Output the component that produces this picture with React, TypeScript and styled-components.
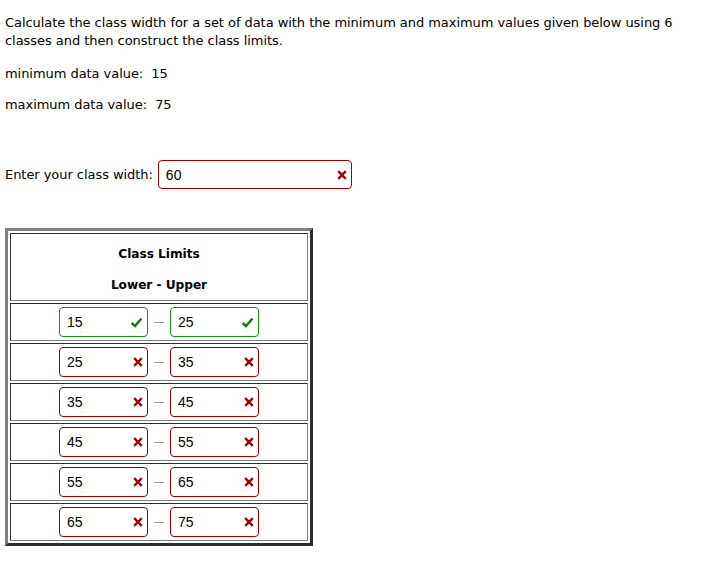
import React from 'react'
import styled, { createGlobalStyle } from 'styled-components'

const GlobalStyle = createGlobalStyle`
  html, body {
    margin: 0;
    padding: 0;
    background: #fff;
  }
  body {
    font-family: 'DejaVu Sans', Verdana, sans-serif;
    font-size: 13px;
    line-height: 18px;
    color: #000;
  }
`

const RED = '#a00000'
const GREEN = '#119911'

const rows = [
  { lower: '15', upper: '25', ok: true },
  { lower: '25', upper: '35', ok: false },
  { lower: '35', upper: '45', ok: false },
  { lower: '45', upper: '55', ok: false },
  { lower: '55', upper: '65', ok: false },
  { lower: '65', upper: '75', ok: false },
]

const CheckIcon: React.FC = () => (
  <svg width="13" height="11" viewBox="0 0 13 11">
    <path d="M1.5 6 L5 9 L11.5 1.5" fill="none" stroke="#108010" strokeWidth="2.4" />
  </svg>
)

const CrossIcon: React.FC = () => (
  <svg width="10" height="10" viewBox="0 0 10 10">
    <path d="M1.2 1.2 L8.8 8.8 M8.8 1.2 L1.2 8.8" fill="none" stroke="#a00000" strokeWidth="2.4" />
  </svg>
)

const AnswerBox: React.FC<{ value: string; ok: boolean; width: number; height: number }> = ({
  value,
  ok,
  width,
  height,
}) => (
  <StyledBox ok={ok} style={{ width, height }}>
    <BoxValue>{value}</BoxValue>
    <BoxIcon>{ok ? <CheckIcon /> : <CrossIcon />}</BoxIcon>
  </StyledBox>
)

const App: React.FC = () => {
  return (
    <StyledPage>
      <GlobalStyle />
      <Question>
        Calculate the class width for a set of data with the minimum and maximum values given below using 6
        classes and then construct the class limits.
      </Question>
      <DataLine first>minimum data value:&nbsp; 15</DataLine>
      <DataLine>maximum data value:&nbsp; 75</DataLine>

      <WidthRow>
        <span>Enter your class width:</span>
        <AnswerBox value="60" ok={false} width={194} height={29} />
      </WidthRow>

      <LimitsTable>
        <tbody>
          <tr>
            <HeaderCell>
              <HeaderLine>Class Limits</HeaderLine>
              <HeaderLine>Lower - Upper</HeaderLine>
            </HeaderCell>
          </tr>
          {rows.map((r, i) => (
            <tr key={i}>
              <RowCell>
                <Pair>
                  <AnswerBox value={r.lower} ok={r.ok} width={89} height={30} />
                  <Dash />
                  <AnswerBox value={r.upper} ok={r.ok} width={89} height={30} />
                </Pair>
              </RowCell>
            </tr>
          ))}
        </tbody>
      </LimitsTable>
    </StyledPage>
  )
}

const StyledPage = styled.div`
  padding: 14px 5px 20px;
  letter-spacing: -0.05px;
`

const Question = styled.div``

const DataLine = styled.div<{ first?: boolean }>`
  margin-top: ${(props) => (props.first ? '15px' : '13px')};
`

const WidthRow = styled.div`
  display: flex;
  align-items: center;
  gap: 5px;
  margin-top: 46px;
`

const StyledBox = styled.div<{ ok: boolean }>`
  box-sizing: border-box;
  display: flex;
  align-items: center;
  border: 1px solid ${(props) => (props.ok ? GREEN : RED)};
  border-radius: 4px;
  padding: 0 4px 0 7px;
  background: #fff;
  text-align: left;
  letter-spacing: 0;
`

const BoxValue = styled.span`
  flex: 1;
  font-family: 'Liberation Sans', Arial, sans-serif;
  font-size: 14px;
  font-weight: normal;
`

const BoxIcon = styled.span`
  display: flex;
  align-items: center;
`

const LimitsTable = styled.table`
  margin-top: 39px;
  border-collapse: separate;
  border-spacing: 2px;
  border-style: solid;
  border-width: 3px;
  border-color: #808080 #2c2c2c #2c2c2c #808080;
  width: 308px;
`

const Cell = styled.td`
  box-sizing: border-box;
  border-style: solid;
  border-width: 1px;
  border-color: #2c2c2c #808080 #808080 #2c2c2c;
  padding: 0;
  text-align: center;
`

const HeaderCell = styled(Cell)`
  height: 68px;
  padding: 11px 0 6px;
  vertical-align: top;
  font-weight: bold;
  font-size: 12.2px;
`

const HeaderLine = styled.div`
  & + & {
    margin-top: 13px;
  }
`

const RowCell = styled(Cell)`
  height: 38px;
  padding: 3px 0;
`

const Pair = styled.div`
  display: flex;
  align-items: center;
  justify-content: center;
  gap: 6px;
`

const Dash = styled.span`
  width: 10px;
  height: 1px;
  background: #999;
`

export default App
